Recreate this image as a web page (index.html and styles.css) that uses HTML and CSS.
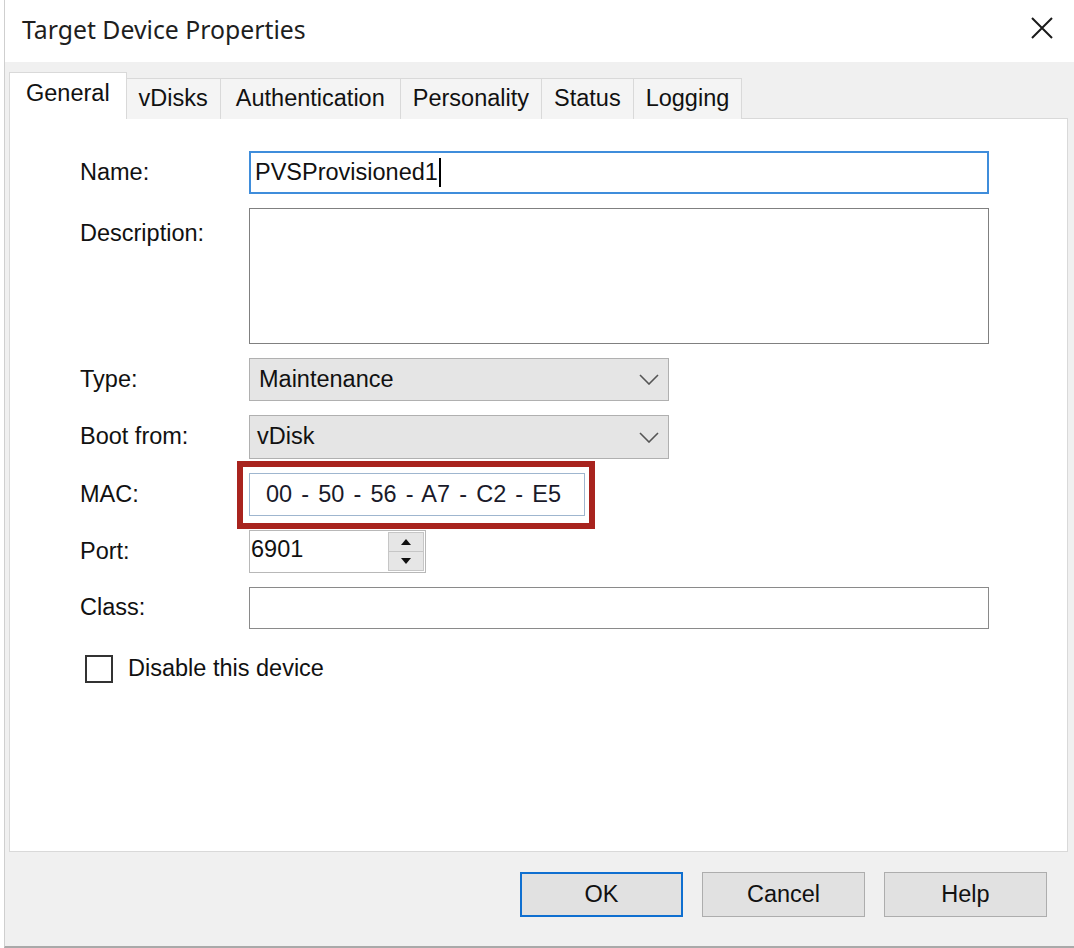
FILE: index.html
```html
<!DOCTYPE html>
<html lang="en">
<head>
    <meta charset="UTF-8">
    <meta name="viewport" content="width=device-width, initial-scale=1.0">
    <title>Target Device Properties</title>
    <link rel="stylesheet" href="styles.css">
</head>
<body>
    <div class="window">
        <div class="titlebar">
            <span class="title">Target Device Properties</span>
            <svg class="close" width="22" height="22" viewBox="0 0 22 22">
                <path d="M1 1 L21 21 M21 1 L1 21" stroke="#1a1a1a" stroke-width="2" fill="none"/>
            </svg>
        </div>
        <div class="client">
            <ul class="tabs">
                <li class="tab tab-active">General</li>
                <li class="tab">vDisks</li>
                <li class="tab tab-auth">Authentication</li>
                <li class="tab">Personality</li>
                <li class="tab">Status</li>
                <li class="tab">Logging</li>
            </ul>
            <div class="panel">
                <div class="form">
                    <div class="lbl">Name:</div>
                    <div class="box box-focus box-wide">PVSProvisioned1<span class="caret"></span></div>

                    <div class="lbl lbl-top">Description:</div>
                    <div class="box box-wide box-area"></div>

                    <div class="lbl">Type:</div>
                    <div class="combo">
                        <span>Maintenance</span>
                        <svg width="20" height="11" viewBox="0 0 20 11"><path d="M1 1 L10 10 L19 1" stroke="#555" stroke-width="1.6" fill="none"/></svg>
                    </div>

                    <div class="lbl">Boot from:</div>
                    <div class="combo combo-tight">
                        <span>vDisk</span>
                        <svg width="20" height="11" viewBox="0 0 20 11"><path d="M1 1 L10 10 L19 1" stroke="#555" stroke-width="1.6" fill="none"/></svg>
                    </div>

                    <div class="lbl">MAC:</div>
                    <div class="mac-wrap">
                        <div class="box box-mac">00 - 50 - 56 - A7 - C2 - E5</div>
                        <div class="highlight"></div>
                    </div>

                    <div class="lbl">Port:</div>
                    <div class="box box-port">
                        <span class="port-val">6901</span>
                        <div class="spin">
                            <div class="spin-btn"><svg width="10" height="6" viewBox="0 0 10 6"><path d="M0 6 L5 0 L10 6 Z" fill="#111"/></svg></div>
                            <div class="spin-btn"><svg width="10" height="6" viewBox="0 0 10 6"><path d="M0 0 L5 6 L10 0 Z" fill="#111"/></svg></div>
                        </div>
                    </div>

                    <div class="lbl">Class:</div>
                    <div class="box box-wide"></div>
                </div>
                <div class="check-row">
                    <span class="checkbox"></span>
                    <span>Disable this device</span>
                </div>
            </div>
            <div class="footer">
                <div class="btn btn-default">OK</div>
                <div class="btn">Cancel</div>
                <div class="btn">Help</div>
            </div>
        </div>
    </div>
</body>
</html>
```

FILE: styles.css
```css
*{
    margin: 0;
    padding: 0;
    box-sizing: border-box;
}
body{
    width: 1074px;
    height: 948px;
    background: #fff;
    font-family: "Liberation Sans", Arial, sans-serif;
    font-size: 23.5px;
    color: #111;
    overflow: hidden;
}
.window{
    margin-left: 4px;
    width: 1070px;
    height: 948px;
    border-left: 1px solid #cfcfcf;
    border-bottom: 2px solid #a9a9a9;
    display: flex;
    flex-direction: column;
}
.titlebar{
    height: 62px;
    flex: none;
    background: #fff;
    display: flex;
    align-items: flex-start;
    justify-content: space-between;
    padding: 12px 21px 0 17px;
}
.title{
    font-family: "Noto Sans", "Open Sans", sans-serif;
    font-size: 24.8px;
    line-height: 34px;
    color: #1e1e1e;
}
.close{
    margin-top: 5px;
}
.client{
    flex: 1;
    background: #f0f0f0;
    padding: 10px 6px 0 4px;
    display: flex;
    flex-direction: column;
}
.tabs{
    list-style: none;
    display: flex;
    align-items: flex-end;
    height: 47px;
    margin-bottom: -1px;
    position: relative;
    z-index: 1;
}
.tab{
    height: 41px;
    border: 1px solid #d9d9d9;
    border-bottom: none;
    background: #f4f4f4;
    padding: 0 12px;
    margin-left: -1px;
    display: flex;
    align-items: center;
    line-height: 1;
}
.tab-auth{
    padding: 0 15px;
}
.tab-active{
    height: 47px;
    margin-left: 0;
    background: #fff;
    padding: 0 16px 4px;
}
.panel{
    height: 734px;
    flex: none;
    background: #fff;
    border: 1px solid #d9d9d9;
    padding: 32px 0 0 70px;
}
.form{
    display: grid;
    grid-template-columns: 169px auto;
    grid-template-rows: 43px 136px 43px 44px 43px 43px 42px;
    row-gap: 14px;
}
.lbl{
    align-self: center;
    line-height: 1;
}
.lbl-top{
    align-self: start;
    padding-top: 14px;
}
.box{
    border: 1px solid #8a8a8a;
    background: #fff;
    height: 100%;
    display: flex;
    align-items: center;
    line-height: 1;
}
.box-wide{
    width: 740px;
}
.box-focus{
    border: 2px solid #3f8ddb;
    padding-left: 4px;
}
.caret{
    display: inline-block;
    width: 2px;
    height: 29px;
    background: #000;
    margin-left: 1px;
}
.box-area{
    border-color: #808080;
}
.combo{
    width: 420px;
    height: 100%;
    background: #e5e5e5;
    border: 1px solid #b0b0b0;
    display: flex;
    align-items: center;
    justify-content: space-between;
    padding: 0 9px 0 9px;
    line-height: 1;
}
.combo-tight{
    padding-left: 7px;
}
.mac-wrap{
    position: relative;
    width: 336px;
    height: 100%;
}
.box-mac{
    border-color: #9fb6cf;
    padding-left: 16px;
    word-spacing: 2.6px;
    color: #1a1a2a;
}
.highlight{
    position: absolute;
    top: -12px;
    left: -12px;
    right: -10px;
    bottom: -13px;
    border: 6px solid #a8231e;
}
.box-port{
    width: 177px;
    border-color: #b8b8b8;
    padding-left: 1px;
    justify-content: space-between;
    align-items: stretch;
}
.port-val{
    align-self: center;
    margin-top: -3px;
}
.spin{
    width: 37px;
    display: flex;
    flex-direction: column;
    padding: 1px 1px 1px 0;
}
.spin-btn{
    flex: 1;
    background: #e6e6e6;
    border: 1px solid #c6c6c6;
    display: flex;
    align-items: center;
    justify-content: center;
}
.spin-btn + .spin-btn{
    border-top: none;
}
.check-row{
    display: flex;
    align-items: center;
    gap: 15px;
    margin: 26px 0 0 5px;
    line-height: 1;
}
.checkbox{
    width: 28px;
    height: 28px;
    border: 2px solid #333;
    background: #fff;
}
.footer{
    display: flex;
    justify-content: flex-end;
    gap: 19px;
    padding: 20px 21px 0 0;
}
.btn{
    width: 163px;
    height: 45px;
    background: #e1e1e1;
    border: 1px solid #adadad;
    display: flex;
    align-items: center;
    justify-content: center;
    line-height: 1;
}
.btn-default{
    border: 2px solid #0f6fd0;
}
```
